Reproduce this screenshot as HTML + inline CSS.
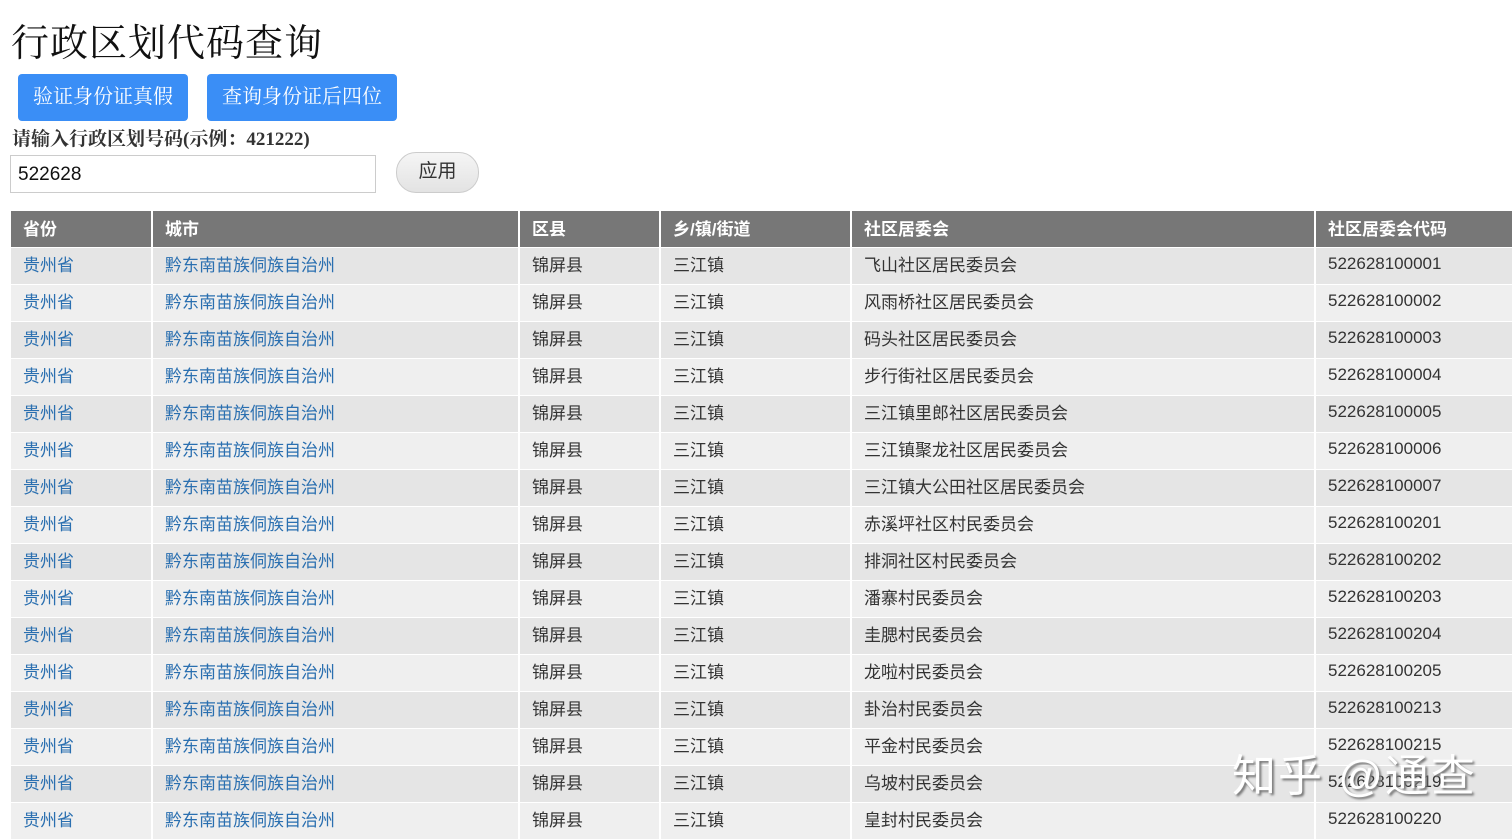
<!DOCTYPE html>
<html><head><meta charset="utf-8"><style>
body{margin:0;background:#fff;font-family:"Liberation Sans","Noto Sans CJK SC",sans-serif;width:1512px;height:833px;overflow:hidden;position:relative}
h1{position:absolute;left:11px;top:12px;margin:0;font:normal 38px "Liberation Serif","Noto Serif CJK SC",serif;color:#111;letter-spacing:1px}
.btn{position:absolute;top:74px;height:47px;background:#3a8ef6;color:#fff;border-radius:4px;font:20px "Liberation Serif","Noto Serif CJK SC",serif;line-height:47px;text-align:center}
.lbl{position:absolute;left:12px;top:124px;font:bold 19px "Liberation Serif","Noto Serif CJK SC",serif;color:#333}
.inp{position:absolute;left:10px;top:155px;height:38px;border:1px solid #ccc;font-size:19px;line-height:38px;padding-left:7px;box-sizing:border-box;width:366px;color:#111}
.ap{position:absolute;left:396px;top:152px;width:81px;height:39px;border:1px solid #ccc;border-radius:20px;background:linear-gradient(#f5f5f5,#e3e3e3);text-align:center;line-height:38px;font-size:19px;color:#333}
table{position:absolute;left:11px;top:211px;border-collapse:collapse;font-size:17px;table-layout:fixed;width:1515px}
th{background:#777;color:#fff;height:36px;text-align:left;padding:0 0 3px 12px;font-weight:bold;border-right:2px solid #fff;box-sizing:border-box}
td{height:37px;padding:0 0 4px 12px;border-right:2px solid #fff;border-top:1px solid #fff;color:#333;box-sizing:border-box;white-space:nowrap}
tr:nth-child(even) td{background:#e5e5e5}
tr:nth-child(odd) td{background:#efefef}
td a{color:#2a6fb0}
.wm{position:absolute;left:1232px;top:740px;font-size:44px;color:#fff;text-shadow:2px 2px 2px #777;letter-spacing:2px}
</style></head><body>
<h1>行政区划代码查询</h1>
<div class="btn" style="left:18px;width:170px">验证身份证真假</div>
<div class="btn" style="left:207px;width:190px">查询身份证后四位</div>
<div class="lbl">请输入行政区划号码(示例：421222)</div>
<div class="inp">522628</div>
<div class="ap">应用</div>
<table>
<colgroup><col style="width:141px"><col style="width:367px"><col style="width:141px"><col style="width:191px"><col style="width:464px"><col style="width:211px"></colgroup>
<tr><th>省份</th><th>城市</th><th>区县</th><th>乡/镇/街道</th><th>社区居委会</th><th style="border-right:0">社区居委会代码</th></tr>
<tr><td><a>贵州省</a></td><td><a>黔东南苗族侗族自治州</a></td><td>锦屏县</td><td>三江镇</td><td>飞山社区居民委员会</td><td>522628100001</td></tr>
<tr><td><a>贵州省</a></td><td><a>黔东南苗族侗族自治州</a></td><td>锦屏县</td><td>三江镇</td><td>风雨桥社区居民委员会</td><td>522628100002</td></tr>
<tr><td><a>贵州省</a></td><td><a>黔东南苗族侗族自治州</a></td><td>锦屏县</td><td>三江镇</td><td>码头社区居民委员会</td><td>522628100003</td></tr>
<tr><td><a>贵州省</a></td><td><a>黔东南苗族侗族自治州</a></td><td>锦屏县</td><td>三江镇</td><td>步行街社区居民委员会</td><td>522628100004</td></tr>
<tr><td><a>贵州省</a></td><td><a>黔东南苗族侗族自治州</a></td><td>锦屏县</td><td>三江镇</td><td>三江镇里郎社区居民委员会</td><td>522628100005</td></tr>
<tr><td><a>贵州省</a></td><td><a>黔东南苗族侗族自治州</a></td><td>锦屏县</td><td>三江镇</td><td>三江镇聚龙社区居民委员会</td><td>522628100006</td></tr>
<tr><td><a>贵州省</a></td><td><a>黔东南苗族侗族自治州</a></td><td>锦屏县</td><td>三江镇</td><td>三江镇大公田社区居民委员会</td><td>522628100007</td></tr>
<tr><td><a>贵州省</a></td><td><a>黔东南苗族侗族自治州</a></td><td>锦屏县</td><td>三江镇</td><td>赤溪坪社区村民委员会</td><td>522628100201</td></tr>
<tr><td><a>贵州省</a></td><td><a>黔东南苗族侗族自治州</a></td><td>锦屏县</td><td>三江镇</td><td>排洞社区村民委员会</td><td>522628100202</td></tr>
<tr><td><a>贵州省</a></td><td><a>黔东南苗族侗族自治州</a></td><td>锦屏县</td><td>三江镇</td><td>潘寨村民委员会</td><td>522628100203</td></tr>
<tr><td><a>贵州省</a></td><td><a>黔东南苗族侗族自治州</a></td><td>锦屏县</td><td>三江镇</td><td>圭腮村民委员会</td><td>522628100204</td></tr>
<tr><td><a>贵州省</a></td><td><a>黔东南苗族侗族自治州</a></td><td>锦屏县</td><td>三江镇</td><td>龙啦村民委员会</td><td>522628100205</td></tr>
<tr><td><a>贵州省</a></td><td><a>黔东南苗族侗族自治州</a></td><td>锦屏县</td><td>三江镇</td><td>卦治村民委员会</td><td>522628100213</td></tr>
<tr><td><a>贵州省</a></td><td><a>黔东南苗族侗族自治州</a></td><td>锦屏县</td><td>三江镇</td><td>平金村民委员会</td><td>522628100215</td></tr>
<tr><td><a>贵州省</a></td><td><a>黔东南苗族侗族自治州</a></td><td>锦屏县</td><td>三江镇</td><td>乌坡村民委员会</td><td>522628100219</td></tr>
<tr><td><a>贵州省</a></td><td><a>黔东南苗族侗族自治州</a></td><td>锦屏县</td><td>三江镇</td><td>皇封村民委员会</td><td>522628100220</td></tr>
</table>
<div class="wm">知乎 @通查</div>
</body></html>
